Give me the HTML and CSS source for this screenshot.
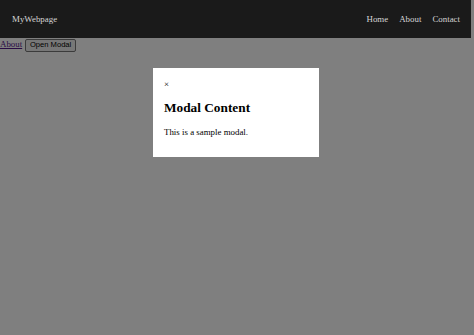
FILE: index.html
```html
<!DOCTYPE html>
<html lang="en">
<head>
<meta charset="utf-8">
<title>MyWebpage</title>
<link rel="stylesheet" href="styles.css">
</head>
<body>
<header class="site-header">
  <div class="logo">MyWebpage</div>
  <nav class="nav">
    <a href="#home">Home</a>
    <a href="#about">About</a>
    <a href="#contact">Contact</a>
  </nav>
</header>
<div class="page-row"><a class="page-link" href="#about">About</a> <button class="open-btn" type="button">Open Modal</button></div>
<div class="overlay">
  <div class="modal">
    <span class="close">&times;</span>
    <h2 class="modal-title">Modal Content</h2>
    <p class="modal-text">This is a sample modal.</p>
  </div>
</div>
</body>
</html>
```

FILE: styles.css
```css
html, body {
  margin: 0;
  padding: 0;
}

body {
  background: #ffffff;
  font-family: "Liberation Serif", "Times New Roman", serif;
  font-size: 8.9px;
  color: #000;
}

.site-header {
  position: relative;
  z-index: 2;
  width: calc(100% - 3px);
  height: 38px;
  box-sizing: border-box;
  padding: 0 11px 0 12px;
  background: #1a1a1a;
  display: flex;
  align-items: center;
  justify-content: space-between;
}

.logo {
  color: #d4d4d4;
}

.nav {
  display: flex;
  gap: 11px;
}

.nav a {
  color: #d4d4d4;
  text-decoration: none;
}

.page-row {
  line-height: 12px;
}

.page-link {
  color: #551a8b;
  text-decoration: underline;
}

.open-btn {
  font-family: "Liberation Sans", Arial, sans-serif;
  font-size: 7.6px;
  color: #000;
  background: #efefef;
  border: 1px solid #767676;
  border-radius: 2px;
  padding: 1px 3.5px;
  margin: 0 0 0 1px;
  line-height: 8.5px;
  vertical-align: baseline;
}

.overlay {
  position: fixed;
  inset: 0;
  z-index: 1;
  background: rgba(0, 0, 0, 0.5);
}

.modal {
  box-sizing: border-box;
  width: 166px;
  margin: 68px auto 0;
  transform: translateX(-1px);
  padding: 11px;
  background: #fff;
}

.close {
  display: block;
  font-size: 8.9px;
  line-height: 10px;
}

.modal-title {
  margin: 11px 0;
  font-size: 13.3px;
  font-weight: bold;
}

.modal-text {
  margin: 9px 0;
  line-height: 10px;
}
```
